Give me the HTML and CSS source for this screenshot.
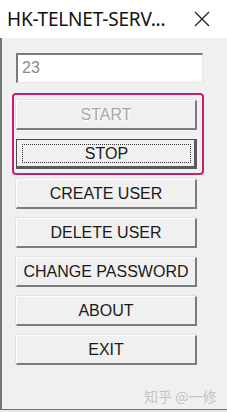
FILE: index.html
```html
<!DOCTYPE html>
<html lang="en">
<head>
    <meta charset="UTF-8">
    <meta name="viewport" content="width=device-width, initial-scale=1.0">
    <title>HK-TELNET-SERVER</title>
    <link rel="stylesheet" href="styles.css">
</head>
<body>
    <div class="window">
        <div class="titlebar">
            <span class="title">HK-TELNET-SERV...</span>
            <svg class="close" width="16" height="16" viewBox="0 0 16 16">
                <path d="M1 1 L15 15 M15 1 L1 15" stroke="#222" stroke-width="1.3" fill="none"/>
            </svg>
        </div>

        <div class="client">
            <div class="port-box">23</div>

            <div class="highlight">
                <button class="btn disabled">START</button>
                <button class="btn focused"><span class="focus-rect">STOP</span></button>
            </div>

            <div class="btn-list">
                <button class="btn">CREATE USER</button>
                <button class="btn">DELETE USER</button>
                <button class="btn">CHANGE PASSWORD</button>
                <button class="btn">ABOUT</button>
                <button class="btn">EXIT</button>
            </div>

            <div class="watermark">知乎 @一修</div>
        </div>
    </div>
</body>
</html>
```

FILE: styles.css
```css
* {
    margin: 0;
    padding: 0;
    box-sizing: border-box;
}

body {
    width: 227px;
    height: 412px;
    overflow: hidden;
    background-color: #e8e8e8;
    font-family: 'Liberation Sans', Arial, sans-serif;
}

.window {
    width: 227px;
}

.titlebar {
    height: 38px;
    background-color: #fff;
    display: flex;
    align-items: center;
    justify-content: space-between;
    padding: 0 17px 0 7px;
}

.title {
    font-family: 'Noto Sans', 'Open Sans', sans-serif;
    font-size: 19px;
    color: #111;
    letter-spacing: -0.2px;
}

.close {
    display: block;
}

.client {
    height: 372px;
    background-color: #f0f0f0;
    border-left: 2px solid #6f7777;
    border-bottom: 1px solid #6f6f6f;
    padding: 15px 0 0 14px;
}

.port-box {
    width: 187px;
    height: 30px;
    background-color: #fff;
    border-top: 2px solid #7a7a7a;
    border-left: 2px solid #7a7a7a;
    border-right: 1px solid #e6e6e6;
    border-bottom: 1px solid #e6e6e6;
    padding: 4px 0 0 4px;
    font-size: 16px;
    color: #8a8a8a;
}

.btn {
    display: block;
    width: 181px;
    height: 30px;
    background-color: #f0f0f0;
    border-top: 1px solid #fff;
    border-left: 1px solid #fff;
    border-right: 2px solid #7c7c7c;
    border-bottom: 2px solid #7c7c7c;
    box-shadow: -1px -1px 0 #e2e2e2;
    font-family: 'Liberation Sans', Arial, sans-serif;
    font-size: 16px;
    color: #1a1a1a;
    text-align: center;
    line-height: 26px;
}

.btn.disabled {
    color: #a8a8a8;
    text-shadow: 1px 1px 0 #fff;
}

.btn.focused {
    border: 1px solid #4a4a4a;
    border-right: 3px solid #5a5a5a;
    border-bottom: 3px solid #5a5a5a;
    box-shadow: none;
    padding: 4px 3px 3px 5px;
}

.focus-rect {
    display: block;
    height: 100%;
    border: 1px dotted #333;
    line-height: 17px;
}

.highlight {
    width: 192px;
    margin: 10px 0 0 -4px;
    padding: 5px 5px 4px 2px;
    border: 2px solid #c4206e;
    border-radius: 4px;
    display: flex;
    flex-direction: column;
    gap: 9px;
}

.btn-list {
    margin-top: 4px;
    display: flex;
    flex-direction: column;
    gap: 9px;
}

.watermark {
    margin: 21px 0 0 128px;
    font-family: 'Noto Sans CJK SC', sans-serif;
    font-size: 14px;
    color: #c4c4c4;
}
```
